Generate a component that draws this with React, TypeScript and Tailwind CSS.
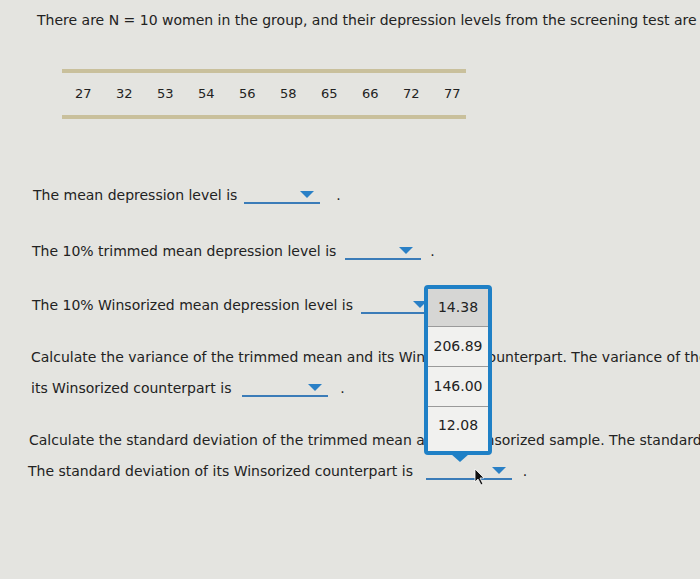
import React from "react";

const Drop = ({ w, arrowRight = 10, ml = 0 }: { w: number; arrowRight?: number; ml?: number }) => (
  <span className="relative inline-block align-baseline h-[18px]" style={{ width: w, marginLeft: ml }}>
    <span className="absolute left-0 right-0 bottom-[-4px] h-[2px] bg-[#3b7cb8]" />
    <span
      className="absolute bottom-[2px] w-0 h-0 border-l-[7px] border-r-[7px] border-t-[7px] border-l-transparent border-r-transparent border-t-[#2a80c6]"
      style={{ right: arrowRight }}
    />
  </span>
);

const nums = ["27", "32", "53", "54", "56", "58", "65", "66", "72", "77"];

export default function App() {
  return (
    <div
      className="relative w-[700px] h-[579px] overflow-hidden bg-[#e4e4e0] text-[#222222] text-[14px]"
      style={{ fontFamily: '"DejaVu Sans", Verdana, sans-serif' }}
    >
      <div className="flex flex-col">
        <div className="mt-[10px] ml-[37px] h-[20px] leading-[20px] whitespace-nowrap">
          There are N = 10 women in the group, and their depression levels from the screening test are listed below.
        </div>

        <div className="mt-[39px] ml-[62px] w-[404px] flex flex-col">
          <div className="h-[4px] bg-[#c9c09c]" />
          <div className="h-[42px] flex items-center pl-[13px] gap-[19px] text-[13px]">
            {nums.map((n) => (
              <span key={n} className="w-[22px]">{n}</span>
            ))}
          </div>
          <div className="h-[4px] bg-[#c9c09c]" />
        </div>

        <div className="mt-[63px] ml-[33px] h-[20px] leading-[20px] whitespace-nowrap">
          The mean depression level is <Drop w={76} arrowRight={6} ml={2} /> <span className="ml-[12px]">.</span>
        </div>

        <div className="mt-[36px] ml-[32px] h-[20px] leading-[20px] whitespace-nowrap">
          The 10% trimmed mean depression level is <Drop w={76} arrowRight={8} ml={4} /> <span className="ml-[5px]">.</span>
        </div>

        <div className="mt-[34px] ml-[32px] h-[20px] leading-[20px] whitespace-nowrap">
          The 10% Winsorized mean depression level is <Drop w={76} ml={3} />
        </div>

        <div className="mt-[35px] ml-[31px] h-[20px] leading-[20px] whitespace-nowrap">
          Calculate the variance of the trimmed mean and its Winsorized counterpart. The variance of the trimmed mean is
        </div>

        <div className="mt-[8px] ml-[31px] h-[20px] leading-[20px] whitespace-nowrap">
          its Winsorized counterpart is <Drop w={86} arrowRight={6} ml={6} /> <span className="ml-[8px]">.</span>
        </div>

        <div className="mt-[35px] ml-[29px] h-[20px] leading-[20px] whitespace-nowrap">
          Calculate the standard deviation of the trimmed mean and its Winsorized sample. The standard deviation of the trimmed mean is
        </div>

        <div className="mt-[8px] ml-[28px] h-[20px] leading-[20px] whitespace-nowrap">
          The standard deviation of its Winsorized counterpart is <Drop w={86} arrowRight={6} ml={9} /> <span className="ml-[6px]">.</span>
        </div>
      </div>

      {/* dropdown popup */}
      <div className="absolute left-[424px] top-[285px] w-[68px] h-[170px] border-[4px] border-[#1f80c6] rounded-[4px] bg-[#f1f1ef] flex flex-col">
        <div className="h-[38px] bg-[#d6d6d4] flex items-center justify-center border-b border-[#9a9a9a]">14.38</div>
        <div className="h-[40px] flex items-start pt-[9px] justify-center border-b border-[#9a9a9a]">206.89</div>
        <div className="h-[40px] flex items-center justify-center border-b border-[#9a9a9a]">146.00</div>
        <div className="h-[40px] flex items-start pt-[8px] justify-center">12.08</div>
      </div>
      <div className="absolute left-[451px] top-[454px] w-0 h-0 border-l-[9px] border-r-[9px] border-t-[8px] border-l-transparent border-r-transparent border-t-[#1f80c6]" />

      {/* mouse cursor */}
      <svg className="absolute left-[474px] top-[468px]" width="12" height="18" viewBox="0 0 12 18">
        <path d="M1 1 L1 14 L4 11 L7 17 L9 16 L6 10 L10 10 Z" fill="#111" stroke="#fff" strokeWidth="0.8" />
      </svg>
    </div>
  );
}
